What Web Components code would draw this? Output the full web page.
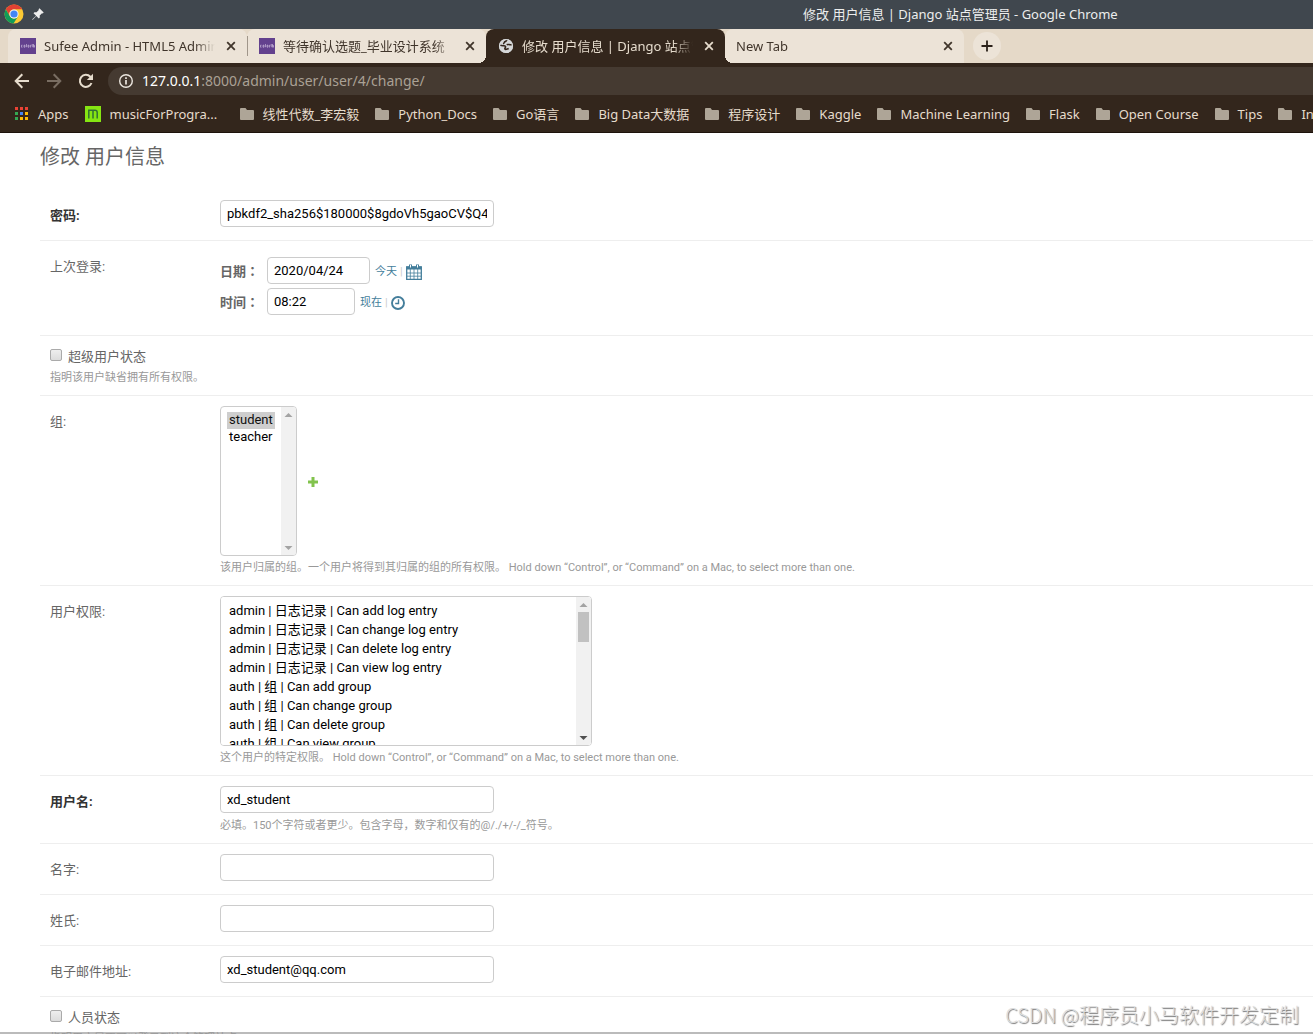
<!DOCTYPE html>
<html lang="zh-CN">
<head>
<meta charset="utf-8">
<title>修改 用户信息 | Django 站点管理员</title>
<style>
    body {
        margin: 0;
        height: 100vh;
        display: flex;
        flex-direction: column;
        overflow: hidden;
        background: #fff;
        color: #666;
        font: 13px/18px Roboto, "Noto Sans CJK SC", sans-serif;
    }
</style>
</head>
<body>
<browser-frame heading="修改 用户信息 | Django 站点管理员 - Google Chrome" host="127.0.0.1" path=":8000/admin/user/user/4/change/">
    <browser-tab slot="tabs" icon="colorlib" heading="Sufee Admin - HTML5 Admin Template"></browser-tab>
    <browser-tab slot="tabs" icon="colorlib" heading="等待确认选题_毕业设计系统" divided></browser-tab>
    <browser-tab slot="tabs" icon="globe" heading="修改 用户信息 | Django 站点管理员" active></browser-tab>
    <browser-tab slot="tabs" heading="New Tab"></browser-tab>
    <book-mark slot="bookmarks" icon="apps">Apps</book-mark>
    <book-mark slot="bookmarks" icon="music">musicForProgra...</book-mark>
    <book-mark slot="bookmarks">线性代数_李宏毅</book-mark>
    <book-mark slot="bookmarks">Python_Docs</book-mark>
    <book-mark slot="bookmarks">Go语言</book-mark>
    <book-mark slot="bookmarks">Big Data大数据</book-mark>
    <book-mark slot="bookmarks">程序设计</book-mark>
    <book-mark slot="bookmarks">Kaggle</book-mark>
    <book-mark slot="bookmarks">Machine Learning</book-mark>
    <book-mark slot="bookmarks">Flask</book-mark>
    <book-mark slot="bookmarks">Open Course</book-mark>
    <book-mark slot="bookmarks">Tips</book-mark>
    <book-mark slot="bookmarks">Interview</book-mark>
</browser-frame>

<change-form heading="修改 用户信息">
    <text-field name="password" label="密码:" value="pbkdf2_sha256$180000$8gdoVh5gaoCV$Q4kTzWmYb2Xe" required></text-field>
    <datetime-field name="last_login" label="上次登录:" date="2020/04/24" time="08:22"></datetime-field>
    <check-field name="is_superuser" label="超级用户状态" help="指明该用户缺省拥有所有权限。"></check-field>
    <select-field name="groups" label="组:" addable help="该用户归属的组。一个用户将得到其归属的组的所有权限。 Hold down “Control”, or “Command” on a Mac, to select more than one.">
        <option selected>student</option>
        <option>teacher</option>
    </select-field>
    <select-field name="user_permissions" label="用户权限:" long help="这个用户的特定权限。 Hold down “Control”, or “Command” on a Mac, to select more than one."></select-field>
    <text-field name="username" label="用户名:" value="xd_student" help="必填。150个字符或者更少。包含字母，数字和仅有的@/./+/-/_符号。" required></text-field>
    <text-field name="first_name" label="名字:"></text-field>
    <text-field name="last_name" label="姓氏:"></text-field>
    <text-field name="email" label="电子邮件地址:" value="xd_student@qq.com"></text-field>
    <check-field name="is_staff" label="人员状态" help="指明用户是否可以登录到这个管理站点。"></check-field>
</change-form>
<page-watermark>CSDN @程序员小马软件开发定制</page-watermark>

<script>
const icons = {
    chrome: `<svg width="20" height="20" viewBox="0 0 20 20"><circle cx="10" cy="10" r="9.5" fill="#fbc934"/><path d="M1.8 5.2A9.5 9.5 0 0 1 18.2 5.3H10A4.7 4.7 0 0 0 5.9 12.3z" fill="#e34133"/><path d="M1.8 5.2A9.5 9.5 0 0 0 9.5 19.5L14.1 12.3A4.7 4.7 0 0 1 5.9 12.3z" fill="#109d58"/><circle cx="10" cy="10" r="4.6" fill="#f1f1f1"/><circle cx="10" cy="10" r="3.6" fill="#4285f4"/></svg>`,
    pin: `<svg width="12" height="12" viewBox="0 0 12 12" fill="#eee"><path d="M7.4.3l4.3 4.3-1 .8-.7-.2-2.3 2.4.1 2-1 .9-2.5-2.6L.8 11.7H.3v-.5L4.1 7.700 1.500 5.200l.9-1 2.100.1L6.800 2l-.2-.8z"/></svg>`,
    colorlib: `<svg width="16" height="16" viewBox="0 0 16 16"><path fill="#63418e" d="M0 0h16v16H0z"/><path d="M2.500 7.200H1.500v2h1M4 7.200h1v2H4zM6.500 6v3.200M8 7.200h1v2H8zM10.500 9.500V7.200h1M12.300 6v3.200M13.500 6v3.200h1V7.400h-1" fill="none" stroke="#d8cbe6" stroke-width=".6"/></svg>`,
    globe: `<svg width="16" height="16" viewBox="0 0 16 16"><circle cx="8" cy="8" r="7" fill="#d5d7d8"/><path d="M9.500 1.500C8 2.200 8.600 3.300 7.200 3.600 5.800 4 6.500 5.500 5 5.800M2.200 7.200c2.200 1.400 4.700-.2 5.300 1.300.4 1.100-1 1.200-.6 2.400.4 1 2.200.3 3.800-.4M8.700 6.700c1.500-.9 3 .7 5.200-.2" fill="none" stroke="#33261c" stroke-width="1.600"/><circle cx="8" cy="8" r="6.500" fill="none" stroke="#d5d7d8" stroke-width="1.200"/></svg>`,
    close: `<svg width="10" height="10" viewBox="0 0 10 10"><path d="M1.200 1.200l7.600 7.600M8.800 1.200L1.200 8.800" stroke="currentColor" stroke-width="1.800"/></svg>`,
    plus: `<svg width="12" height="12" viewBox="0 0 12 12"><path d="M6 .5v11M.5 6h11" stroke="#2b211a" stroke-width="1.800"/></svg>`,
    back: `<svg width="16" height="16" viewBox="0 0 16 16" fill="none" stroke="currentColor" stroke-width="2"><path d="M15 8H2M8.300 1.300L1.700 8l6.600 6.700"/></svg>`,
    forward: `<svg width="16" height="16" viewBox="0 0 16 16" fill="none" stroke="currentColor" stroke-width="2"><path d="M1 8h13M7.700 1.300L14.300 8l-6.600 6.700"/></svg>`,
    reload: `<svg width="16" height="16" viewBox="0 0 16 16"><path d="M13.500 10A6 6 0 1 1 12.300 3.800L14 5.500" fill="none" stroke="currentColor" stroke-width="2"/><path d="M15 .8v6.200H8.800z" fill="currentColor"/></svg>`,
    info: `<svg width="16" height="16" viewBox="0 0 16 16"><circle cx="8" cy="8" r="6.300" fill="none" stroke="#ebe6df" stroke-width="1.400"/><path d="M8 7v4.600M8 4.200v1.700" stroke="#ebe6df" stroke-width="1.700"/></svg>`,
    apps: `<svg width="15" height="14" viewBox="-1 0 15 14"><path fill="#ea4335" d="M0 0h3v3H0zM5 0h3v3H5zM10 0h3v3h-3z"/><path fill="#34a853" d="M0 5h3v3H0zM0 10h3v3H0z"/><path fill="#4285f4" d="M5 5h3v3H5z"/><path fill="#fbbc05" d="M10 5h3v3h-3zM5 10h3v3H5zM10 10h3v3h-3z"/></svg>`,
    music: `<svg width="16" height="16" viewBox="0 0 16 16"><path fill="#86e512" d="M0 0h16v16H0z"/><path d="M3.800 12.500V4.200h6.200q2.200 0 2.200 2.200v6.100M8 4.200v8.300" fill="none" stroke="#317034" stroke-width="1.500"/></svg>`,
    folder: `<svg width="14" height="12" viewBox="0 0 14 12"><path fill="#aea597" d="M1 0h4.500L7 2h6q1 0 1 1v8q0 1-1 1H1q-1 0-1-1V1q0-1 1-1z"/></svg>`,
    add: `<svg width="10" height="10" viewBox="0 0 10 10"><path d="M5 0v10M0 5h10" stroke="#82c34d" stroke-width="3"/></svg>`,
    calendar: `<svg width="16" height="16" viewBox="0 0 16 16"><path d="M.7 3h14.600v12.400H.7z" fill="#fff" stroke="#447e9b" stroke-width="1.300"/><path d="M.3 2.500h15.400v3H.3z" fill="#447e9b"/><path d="M4.500.5v3M11.500.5v3" stroke="#447e9b" stroke-width="3"/><path d="M4.500 1v2.500M11.500 1v2.500" stroke="#fff"/><path d="M4.300 5v10.500M8 5v10.500M11.700 5v10.500M1 9h14M1 12.200h14" stroke="#447e9b" stroke-width=".8"/></svg>`,
    clock: `<svg width="14" height="14" viewBox="0 0 14 14" fill="none" stroke="#447e9b"><circle cx="7" cy="7" r="6" stroke-width="1.900"/><path d="M7.500 3.200v4.300H4.200" stroke-width="1.400"/></svg>`,
    up: `<svg width="15" height="15" viewBox="0 0 15 15"><path d="M3.500 10h8l-4-4z" fill="#a3a3a3"/></svg>`,
    down: `<svg width="15" height="15" viewBox="0 0 15 15"><path d="M3.500 6h8l-4 4z" fill="currentColor"/></svg>`
};

// Small base class: subclasses provide css() and html()
class Base extends HTMLElement {
    connectedCallback() {
        if (this.shadowRoot) return;
        this.attachShadow({mode: 'open'});
        this.shadowRoot.innerHTML = `<style>:host, * { box-sizing: border-box; } ${this.css()}</style>${this.html()}`;
        this.ready();
    }

    attr(name) {
        return this.getAttribute(name) || '';
    }

    ready() {}
}

class BrowserFrame extends Base {
    css() {
        return `
            :host { display: block; flex: none; background: #33261c; color: #e6dccd; font: 13px/18px "Noto Sans", "Noto Sans CJK SC", sans-serif; border-bottom: 1px solid #1d120b; }
            button { display: flex; align-items: center; justify-content: center; border: 0; padding: 0; background: none; color: inherit; }
            .titlebar { display: grid; grid-template-columns: 803px 1fr; align-items: center; height: 29px; padding-bottom: 2px; background: #40474e; color: #eceded; white-space: nowrap; }
            .launch { display: flex; align-items: center; gap: 8px; padding-left: 4px; }
            .tabs { display: flex; align-items: center; height: 34px; padding-left: 8px; background: #e5d9c8; }
            .new { width: 28px; height: 28px; margin-left: 9px; border-radius: 50%; background: #ece3d7; flex: none; }
            .toolbar { display: flex; align-items: center; height: 36px; gap: 16px; padding-left: 14px; }
            .toolbar button { width: 16px; height: 16px; }
            .toolbar button:disabled { color: #796d62; }
            .address { flex: 1; display: flex; align-items: center; gap: 8px; height: 28px; padding-left: 10px; margin-left: -2px; border-radius: 14px 0 0 14px; background: #453a31; font-size: 14px; color: #aaa195; }
            .address b { font-weight: 400; color: #fff; }
            .bookmarks { display: flex; align-items: center; gap: 16px; height: 33px; padding: 0 0 4px 14px; overflow: hidden; }
        `;
    }

    html() {
        return `
            <div class="titlebar"><div class="launch">${icons.chrome}${icons.pin}</div><span>${this.attr('heading')}</span></div>
            <div class="tabs"><slot name="tabs"></slot><button class="new" aria-label="+">${icons.plus}</button></div>
            <div class="toolbar">
                <button aria-label="←">${icons.back}</button>
                <button aria-label="→" disabled>${icons.forward}</button>
                <button aria-label="↻">${icons.reload}</button>
                <div class="address">${icons.info}<span><b>${this.attr('host')}</b>${this.attr('path')}</span></div>
            </div>
            <nav class="bookmarks"><slot name="bookmarks"></slot></nav>
        `;
    }
}

class BrowserTab extends Base {
    css() {
        return `
            :host { position: relative; display: flex; align-items: center; gap: 8px; flex: 0 1 239px; min-width: 0; height: 34px; padding: 0 11px; border-radius: 8px 8px 0 0; background: #ece3d7; color: #40352b; }
            :host([icon]) { padding-left: 12px; }
            :host([divided])::before { content: ""; position: absolute; left: 0; top: 7px; width: 1px; height: 20px; background: #a0968a; }
            :host([active]) { z-index: 1; background: #33261c; color: #e6dccd; }
            /* curved feet of the active tab */
            :host([active])::before, :host([active])::after { content: ""; position: absolute; bottom: 0; width: 8px; height: 8px; }
            :host([active])::before { right: 100%; background: radial-gradient(circle at 0 0, transparent 8px, #33261c 8px); }
            :host([active])::after { left: 100%; background: radial-gradient(circle at 100% 0, transparent 8px, #33261c 8px); }
            svg { flex: none; }
            span { flex: 1; min-width: 0; overflow: hidden; white-space: nowrap; -webkit-mask-image: linear-gradient(90deg, #000 calc(100% - 20px), transparent); }
            button { display: flex; border: 0; padding: 0 0 0 3px; background: none; color: inherit; }
        `;
    }

    html() {
        return `${icons[this.attr('icon')] || ''}<span>${this.attr('heading')}</span><button aria-label="×">${icons.close}</button>`;
    }
}

class BookMark extends Base {
    css() {
        return `
            :host { display: block; flex: none; white-space: nowrap; }
            :host([icon=music]) { min-width: 139px; }
            a { display: flex; align-items: center; gap: 9px; color: inherit; text-decoration: none; }
        `;
    }

    html() {
        return `<a href="#">${icons[this.attr('icon')] || icons.folder}<span><slot></slot></span></a>`;
    }
}

class ChangeForm extends Base {
    css() {
        return `
            :host { display: block; flex: 1; min-height: 0; overflow: hidden; padding: 12px 0 0 40px; background: linear-gradient(#bbb, #bbb) bottom / 100% 2px no-repeat; }
            h1 { margin: 0 0 21px; font-size: 20px; line-height: 24px; font-weight: 400; }
        `;
    }

    html() {
        return `<h1>${this.attr('heading')}</h1><form><slot></slot></form>`;
    }
}

// Every form row shares this sheet
class Field extends Base {
    css() {
        return `
            :host { display: grid; grid-template-columns: 170px 1fr; padding: 10px 0 10px 10px; border-bottom: 1px solid #eee; }
            .label { padding-top: 7px; }
            :host([required]) .label { font-weight: 700; color: #333; }
            input, select { margin: 0; border: 1px solid #ccc; border-radius: 4px; background: #fff; color: #000; font: inherit; outline: 0; }
            input { display: block; height: 27px; padding: 5px 6px; }
            .help { padding-top: 2px; font-size: 11px; line-height: 15px; color: #999; white-space: nowrap; }
        `;
    }

    help() {
        return this.attr('help') ? `<div class="help">${this.attr('help')}</div>` : '';
    }
}

class TextField extends Field {
    css() {
        return super.css() + `
            input { width: 274px; margin-bottom: 3px; }
        `;
    }

    html() {
        return `
            <label class="label" for="field">${this.attr('label')}</label>
            <div><input id="field" type="text" name="${this.attr('name')}" value="${this.attr('value')}">${this.help()}</div>
        `;
    }
}

class DatetimeField extends Field {
    css() {
        return super.css() + `
            .rows { display: grid; gap: 4px; padding: 6px 0 10px; }
            .row { display: flex; align-items: center; }
            .row label { width: 47px; padding-top: 2px; font-weight: 700; font-family: Roboto, "Noto Sans CJK JP", sans-serif; }
            #date { width: 103px; }
            #time { width: 88px; }
            .links { display: flex; align-items: center; gap: 3px; padding: 3px 0 0 5px; font-size: 11px; color: #ccc; }
            a { display: flex; color: #447e9b; text-decoration: none; }
        `;
    }

    html() {
        return `
            <span class="label">${this.attr('label')}</span>
            <div class="rows">
                <div class="row"><label for="date" lang="ja">日期：</label><input id="date" type="text" value="${this.attr('date')}">
                    <span class="links"><a href="#">今天</a>|<a href="#">${icons.calendar}</a></span></div>
                <div class="row"><label for="time" lang="ja">时间：</label><input id="time" type="text" value="${this.attr('time')}">
                    <span class="links"><a href="#">现在</a>|<a href="#">${icons.clock}</a></span></div>
            </div>
        `;
    }
}

class CheckField extends Field {
    css() {
        return super.css() + `
            :host { display: block; }
            .row { display: flex; gap: 6px; line-height: 22px; }
            input { appearance: none; width: 12px; height: 12px; margin-top: 3px; padding: 0; border-color: #aaa; border-radius: 2px; background: linear-gradient(#eee, #dcdcdc); }
        `;
    }

    html() {
        return `
            <div class="row"><input id="field" type="checkbox" name="${this.attr('name')}"><label for="field">${this.attr('label')}</label></div>
            ${this.help()}
        `;
    }
}

class SelectField extends Field {
    css() {
        return super.css() + `
            .row { display: flex; align-items: center; gap: 11px; margin-bottom: 2px; }
            .list { position: relative; display: flex; }
            select { width: 77px; height: 150px; padding: 5px 21px 5px 6px; scrollbar-width: none; }
            option { min-height: 17px; padding: 0 2px; line-height: 17px; }
            :host([long]) select { width: 372px; padding-top: 3px; }
            :host([long]) option { min-height: 19px; line-height: 19px; }
            a { display: flex; padding-top: 2px; }
            /* classic scrollbar over the right edge of the list */
            .bar { position: absolute; top: 1px; right: 1px; bottom: 1px; width: 15px; display: flex; flex-direction: column; border-radius: 0 3px 3px 0; background: #f1f1f1; color: #a3a3a3; pointer-events: none; }
            .bar i { flex: 1; }
            :host([long]) .bar { color: #505050; }
            :host([long]) .bar i::before { content: ""; display: block; height: 30px; margin: 0 2px; background: #c1c1c1; }
        `;
    }

    html() {
        return `
            <label class="label" for="field">${this.attr('label')}</label>
            <div>
                <div class="row">
                    <div class="list"><select id="field" name="${this.attr('name')}" multiple></select><div class="bar">${icons.up}<i></i>${icons.down}</div></div>
                    ${this.hasAttribute('addable') ? `<a href="#" aria-label="+">${icons.add}</a>` : ''}
                </div>
                ${this.help()}
            </div>
        `;
    }

    ready() {
        this.shadowRoot.getElementById('field').append(...this.querySelectorAll('option'));
    }
}

// One permission per action for each model
const models = ['admin | 日志记录', 'auth | 组', 'auth | 权限', 'contenttypes | 内容类型', 'sessions | 会话', 'user | 用户信息', 'user | 学生'];
const permissions = document.querySelector('[name=user_permissions]');
for (const model of models) {
    for (const action of ['add', 'change', 'delete', 'view']) {
        const noun = model.startsWith('admin') ? 'log entry' : model.endsWith('组') ? 'group' : model.split(' | ')[1];
        permissions.append(new Option(`${model} | Can ${action} ${noun}`));
    }
}

class PageWatermark extends Base {
    css() {
        return `
            :host { position: absolute; right: 14px; bottom: 5px; font: 300 20px/28px "Noto Sans CJK SC", sans-serif; color: #ddd; text-shadow: 1px 1px 1px #777; white-space: nowrap; }
        `;
    }

    html() {
        return '<slot></slot>';
    }
}

customElements.define('browser-tab', BrowserTab);
customElements.define('book-mark', BookMark);
customElements.define('browser-frame', BrowserFrame);
customElements.define('text-field', TextField);
customElements.define('datetime-field', DatetimeField);
customElements.define('check-field', CheckField);
customElements.define('select-field', SelectField);
customElements.define('change-form', ChangeForm);
customElements.define('page-watermark', PageWatermark);
</script>
</body>
</html>
